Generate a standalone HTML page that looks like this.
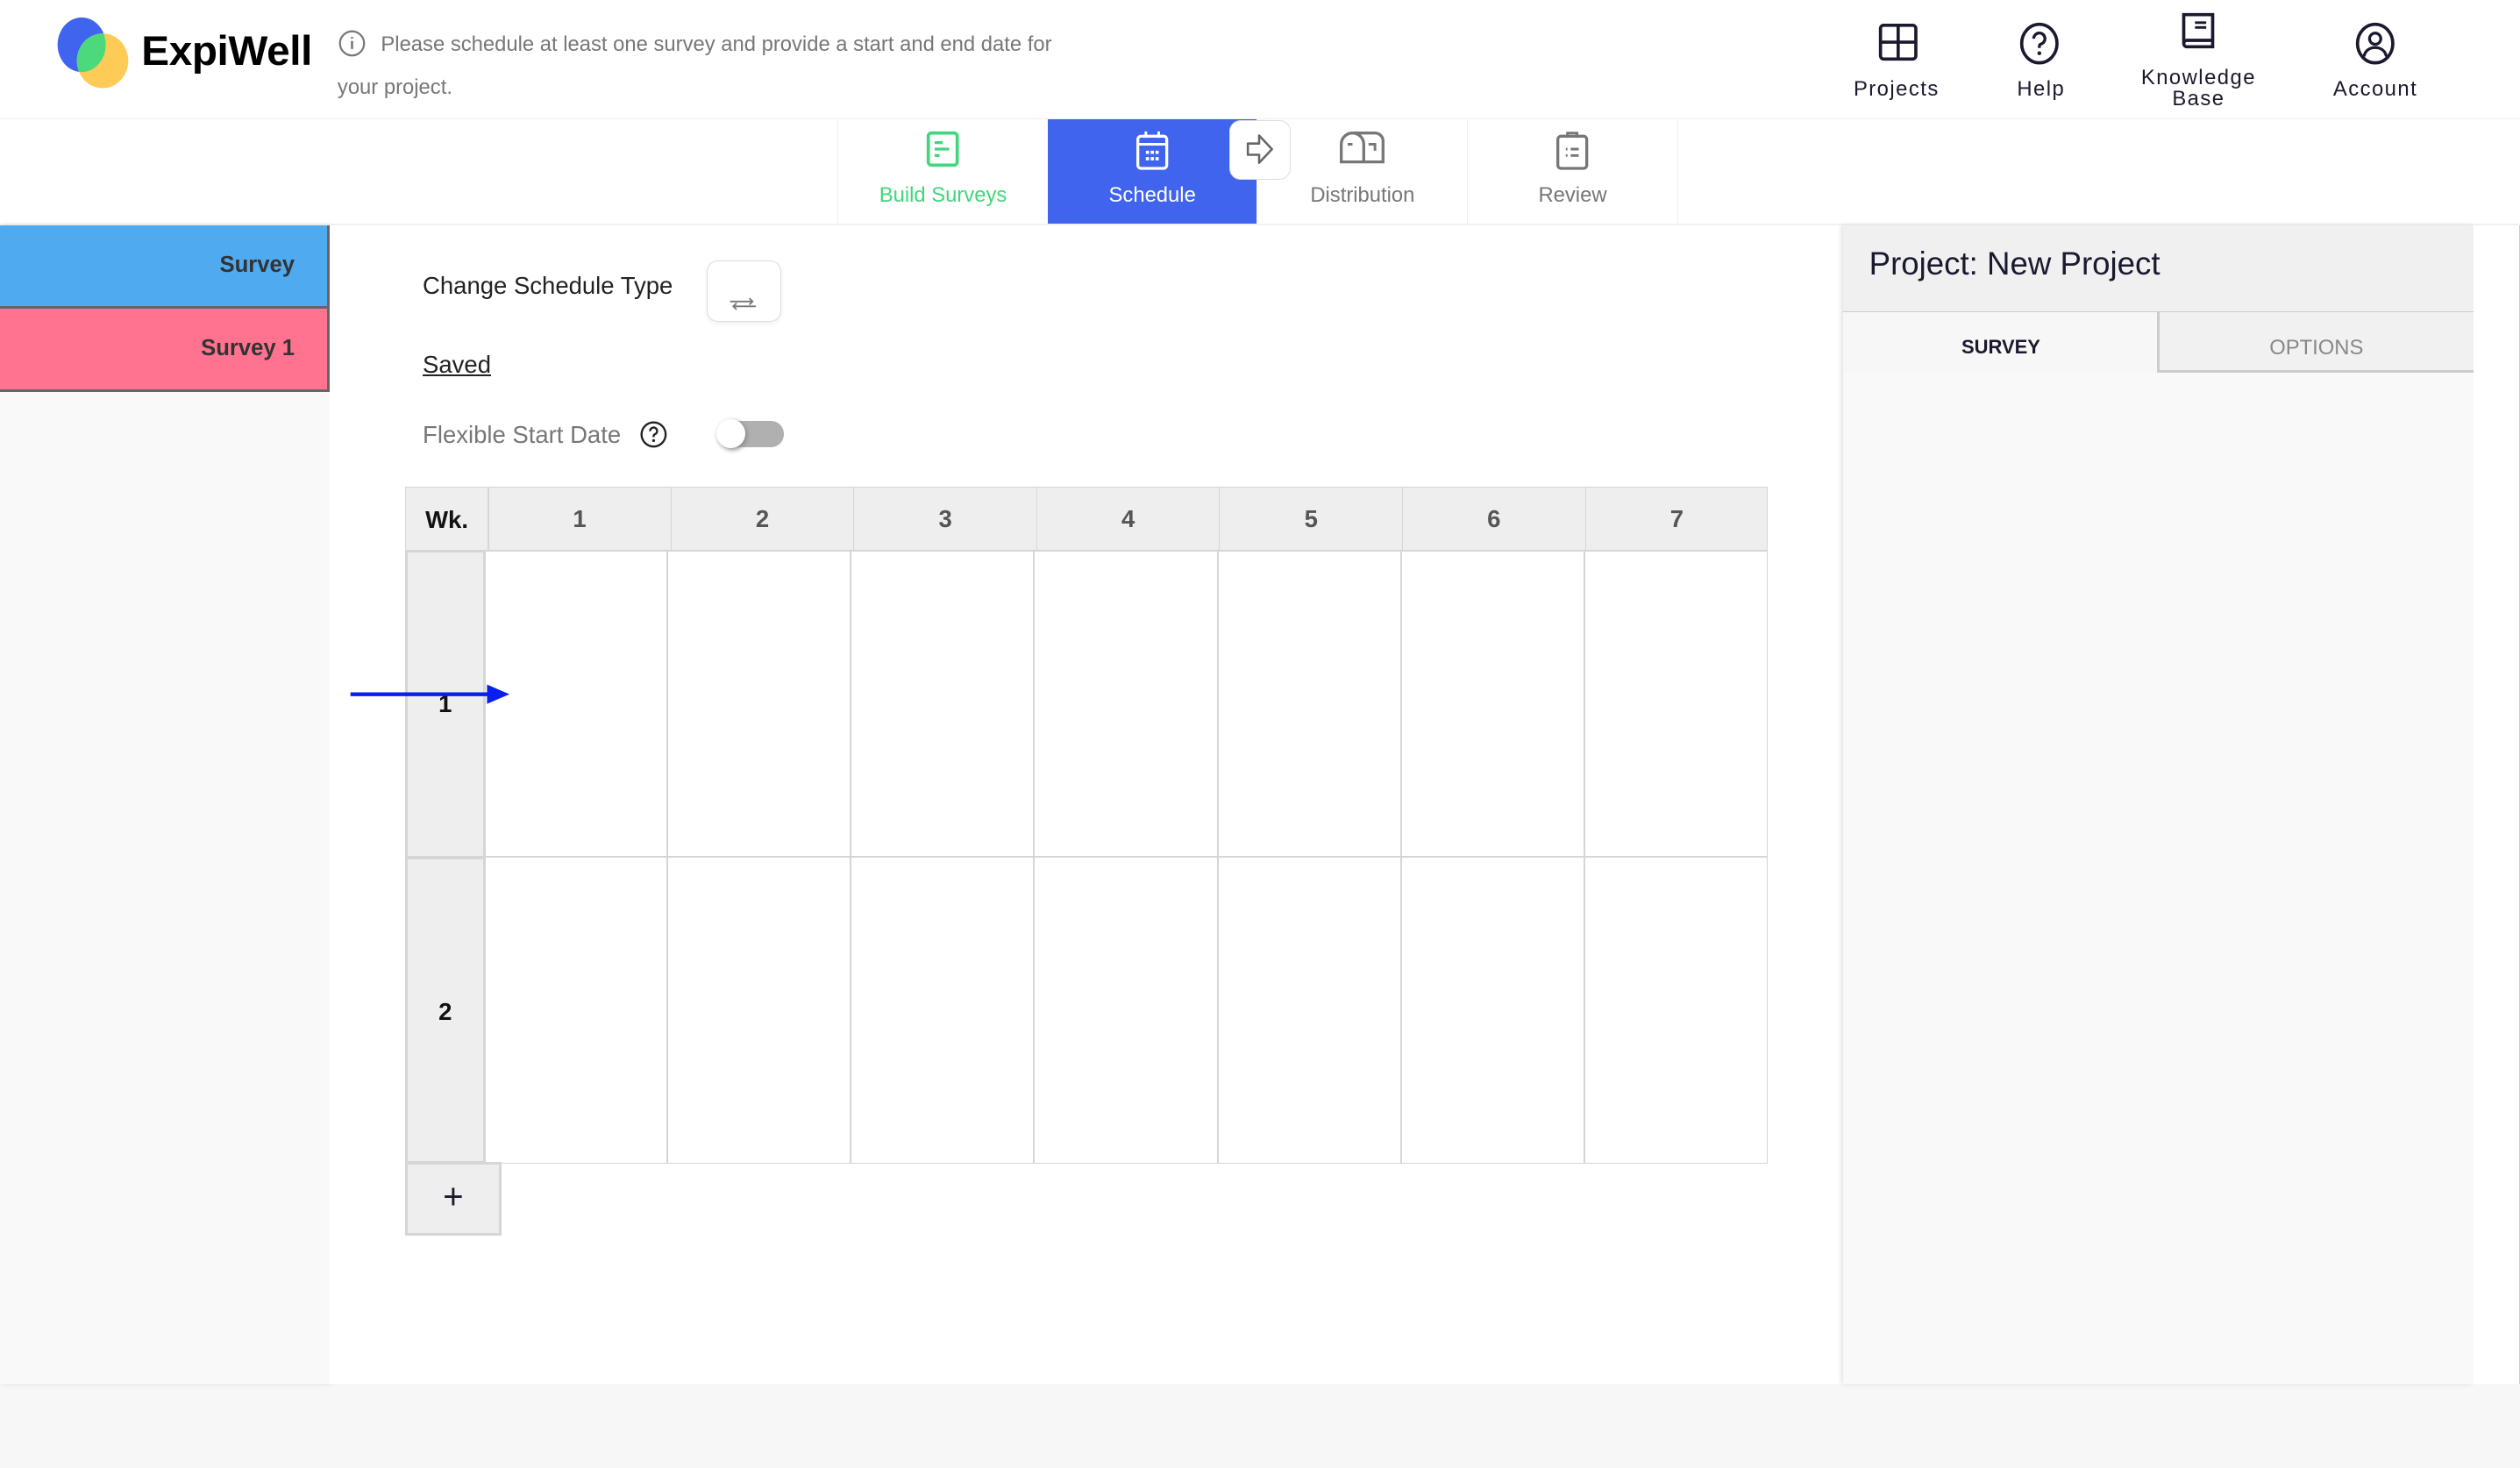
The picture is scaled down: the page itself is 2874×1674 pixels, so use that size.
<!DOCTYPE html>
<html><head><meta charset="utf-8"><style>
*{box-sizing:border-box;margin:0;padding:0}
html,body{width:2874px;height:1674px;overflow:hidden;background:#f7f7f7}
#w{zoom:1.8329;width:1568px;height:913px;position:relative;font-family:"Liberation Sans",sans-serif;background:#f7f7f7}
.a{position:absolute}
.hdr{left:0;top:0;width:1568px;height:74px;background:#fff;border-bottom:1px solid #eee}
.nav{font-size:13px;letter-spacing:.8px;color:#1a1a2e;text-align:center}
.tabbar{left:0;top:74px;width:1568px;height:65px;background:#fff;box-shadow:0 1px 2px #eee}
.tab{top:74px;height:65px;width:131px;text-align:center;font-size:13px;color:#777;border-left:1px solid #f0f0f0}
.tab svg{display:block;margin:7px auto 0}
.tab span{display:block;margin-top:8px}
.cell{border:1px solid #d6d6d6}
</style></head><body><div id="w">
<div class="a hdr"></div>
<svg class="a" style="left:34px;top:10px" width="48" height="46" viewBox="0 0 48 46">
<ellipse cx="17" cy="18" rx="15" ry="17" fill="#4064ee"/>
<ellipse cx="30" cy="28" rx="16" ry="17" fill="#ffcb57"/>
<clipPath id="c"><ellipse cx="17" cy="18" rx="15" ry="17"/></clipPath>
<ellipse cx="30" cy="28" rx="16" ry="17" fill="#4bd97b" clip-path="url(#c)"/>
</svg>
<div class="a" style="left:88px;top:17px;font-size:26px;font-weight:bold;color:#000;letter-spacing:-.2px">ExpiWell</div>
<svg class="a" style="left:210px;top:18px" width="18" height="18" viewBox="0 0 18 18"><circle cx="9" cy="9" r="7.5" fill="none" stroke="#777" stroke-width="1.2"/><path d="M9 7.5v5M9 5v1" stroke="#777" stroke-width="1.4"/></svg>
<div class="a" style="left:237px;top:14px;font-size:13px;color:#777;width:460px;line-height:27px">Please schedule at least one survey and provide a start and end date for</div>
<div class="a" style="left:210px;top:47px;font-size:13px;color:#777">your project.</div>
<svg class="a" style="left:1168px;top:15px" width="26" height="24" viewBox="0 0 26 24"><rect x="2" y="1" width="22" height="21" rx="2" fill="none" stroke="#1a1a2e" stroke-width="2"/><path d="M13 1v21M2 11.5h22" stroke="#1a1a2e" stroke-width="2"/></svg>
<div class="a nav" style="left:1140px;top:48px;width:80px">Projects</div>
<svg class="a" style="left:1256px;top:13px" width="26" height="28" viewBox="0 0 26 28"><ellipse cx="13" cy="14" rx="11" ry="12" fill="none" stroke="#1a1a2e" stroke-width="2"/><path d="M9.5 11a3.5 3.5 0 1 1 4.5 3.3c-1 .4-1 1-1 2.5" fill="none" stroke="#1a1a2e" stroke-width="1.8"/><circle cx="13" cy="20" r="1.2" fill="#1a1a2e"/></svg>
<div class="a nav" style="left:1230px;top:48px;width:80px">Help</div>
<svg class="a" style="left:1356px;top:7px" width="24" height="26" viewBox="0 0 24 26"><path d="M3 2h18v20H5a2 2 0 0 1-2-2zM3 20a2 2 0 0 1 2-2h16" fill="none" stroke="#1a1a2e" stroke-width="2"/><path d="M10 7h7M10 10h7" stroke="#1a1a2e" stroke-width="1.6"/></svg>
<div class="a nav" style="left:1318px;top:42px;width:100px;line-height:13px">Knowledge<br>Base</div>
<svg class="a" style="left:1465px;top:13px" width="26" height="28" viewBox="0 0 26 28"><ellipse cx="13" cy="14" rx="11" ry="12" fill="none" stroke="#1a1a2e" stroke-width="2"/><circle cx="13" cy="11" r="3.5" fill="none" stroke="#1a1a2e" stroke-width="1.8"/><path d="M6 22c1-4 4-5.5 7-5.5s6 1.5 7 5.5" fill="none" stroke="#1a1a2e" stroke-width="1.8"/></svg>
<div class="a nav" style="left:1438px;top:48px;width:80px">Account</div>
<div class="a tabbar"></div>
<div class="a tab" style="left:521px;color:#41d67c"><svg width="22" height="24" viewBox="0 0 22 24"><rect x="2" y="2" width="18" height="20" rx="2" fill="none" stroke="#41d67c" stroke-width="2"/><path d="M6 8h5M6 12h9M6 16h3" stroke="#41d67c" stroke-width="1.8"/></svg><span style="margin-top:9px">Build Surveys</span></div>
<div class="a tab" style="left:652px;width:130px;background:#4064ee;color:#fff;border:none"><svg width="22" height="26" viewBox="0 0 22 26"><rect x="2" y="4" width="18" height="20" rx="2" fill="none" stroke="#fff" stroke-width="1.8"/><path d="M2 9h18M7 1v4M15 1v4" stroke="#fff" stroke-width="1.6"/><path d="M7 13h2v2H7zM10 13h2v2h-2zM13 13h2v2h-2zM7 17h2v2H7zM10 17h2v2h-2zM13 17h2v2h-2z" fill="#fff"/></svg><span style="margin-top:7px">Schedule</span></div>
<div class="a tab" style="left:782px"><svg width="30" height="22" viewBox="0 0 30 22"><path d="M9 2h14a5 5 0 0 1 5 5v13H2V9a7 7 0 0 1 7-7zM9 2a7 7 0 0 1 7 7v11" fill="none" stroke="#777" stroke-width="1.8"/><path d="M6 9h3M19 9h4v4" fill="none" stroke="#777" stroke-width="1.6"/></svg><span style="margin-top:11px">Distribution</span></div>
<div class="a tab" style="left:913px;width:131px;border-right:1px solid #f0f0f0"><svg width="22" height="26" viewBox="0 0 22 26"><rect x="2" y="4" width="18" height="20" rx="2" fill="none" stroke="#777" stroke-width="1.8"/><path d="M8 5V2h6v3" fill="none" stroke="#777" stroke-width="1.6"/><path d="M7 12h1M10 12h5M7 16h1M10 16h5" stroke="#777" stroke-width="1.6"/></svg><span style="margin-top:7px">Review</span></div>
<div class="a" style="left:765px;top:75px;width:38px;height:37px;background:#fff;border:1px solid #ddd;border-radius:7px"><svg width="36" height="35" viewBox="0 0 36 35"><path d="M11 14h7v-5l8 8.5-8 8.5v-5h-7z" fill="none" stroke="#666" stroke-width="1.4" stroke-linejoin="round"/></svg></div>
<div class="a" style="left:0;top:140px;width:205px;height:721px;background:#f9f9f9;box-shadow:1px 0 3px #ddd"></div>
<div class="a" style="left:0;top:140px;width:205px;height:52px;background:#50aaf0;border-right:2px solid #666;border-bottom:2px solid #666;font-size:14px;font-weight:bold;color:#333;text-align:right;padding:17px 20px 0 0">Survey</div>
<div class="a" style="left:0;top:192px;width:205px;height:52px;background:#ff7390;border-right:2px solid #666;border-bottom:2px solid #666;font-size:14px;font-weight:bold;color:#333;text-align:right;padding:17px 20px 0 0">Survey 1</div>
<div class="a" style="left:205px;top:140px;width:942px;height:721px;background:#fff"></div>
<div class="a" style="left:263px;top:169px;font-size:15px;color:#222">Change Schedule Type</div>
<div class="a" style="left:440px;top:162px;width:46px;height:38px;border:1px solid #ddd;border-radius:7px;background:#fff;box-shadow:0 1px 3px #eee"><svg width="44" height="36" viewBox="0 0 44 36"><path d="M14 25h14M26 23l2 2-2 2M30 28H16M18 26l-2 2 2 2" fill="none" stroke="#777" stroke-width="1"/></svg></div>
<div class="a" style="left:263px;top:218px;font-size:15px;color:#222;text-decoration:underline">Saved</div>
<div class="a" style="left:263px;top:262px;font-size:15px;color:#777">Flexible Start Date</div>
<svg class="a" style="left:397px;top:261px" width="19" height="19" viewBox="0 0 19 19"><circle cx="9.5" cy="9.5" r="7.5" fill="none" stroke="#222" stroke-width="1.3"/><path d="M7.3 7.5a2.2 2.2 0 1 1 2.8 2c-.6.3-.6.7-.6 1.6" fill="none" stroke="#222" stroke-width="1.3"/><circle cx="9.5" cy="13.3" r=".9" fill="#222"/></svg>
<div class="a" style="left:447px;top:262px;width:41px;height:16px;border-radius:8px;background:#b0b0b0"></div>
<div class="a" style="left:446px;top:261px;width:18px;height:18px;border-radius:9px;background:#fff;box-shadow:1px 1px 3px #888"></div>
<div class="a" style="left:252px;top:303px;width:848px;height:421px;border:1px solid #d6d6d6;background:#fff"></div>
<div class="a cell" style="left:252px;top:303px;width:52px;height:40px;background:#eee;font-size:15px;font-weight:bold;color:#111;text-align:center;padding-top:11px">Wk.</div>
<div class="a" style="left:304px;top:303px;width:796px;height:40px;background:#eee;border:1px solid #d6d6d6"></div>
<div class="a" style="left:304px;top:303px;width:796px;height:40px;display:flex;font-size:15px;font-weight:bold;color:#555">
<div style="flex:1;text-align:center;padding-top:11px;border-right:1px solid #d6d6d6">1</div><div style="flex:1;text-align:center;padding-top:11px;border-right:1px solid #d6d6d6">2</div><div style="flex:1;text-align:center;padding-top:11px;border-right:1px solid #d6d6d6">3</div><div style="flex:1;text-align:center;padding-top:11px;border-right:1px solid #d6d6d6">4</div><div style="flex:1;text-align:center;padding-top:11px;border-right:1px solid #d6d6d6">5</div><div style="flex:1;text-align:center;padding-top:11px;border-right:1px solid #d6d6d6">6</div><div style="flex:1;text-align:center;padding-top:11px">7</div></div>
<div class="a cell" style="left:252px;top:342px;width:50px;height:192px;background:#eee;border-width:2px;font-size:15px;font-weight:bold;color:#111;text-align:center;padding-top:86px">1</div>
<div class="a cell" style="left:252px;top:533px;width:50px;height:191px;background:#eee;border-width:2px;font-size:15px;font-weight:bold;color:#111;text-align:center;padding-top:86px">2</div>
<div class="a" style="left:301px;top:342px;width:799px;height:382px;display:grid;grid-template-columns:repeat(7,1fr);grid-template-rows:1fr 1fr">
<div class="cell"></div><div class="cell"></div><div class="cell"></div><div class="cell"></div><div class="cell"></div><div class="cell"></div><div class="cell"></div>
<div class="cell"></div><div class="cell"></div><div class="cell"></div><div class="cell"></div><div class="cell"></div><div class="cell"></div><div class="cell"></div></div>
<div class="a" style="left:252px;top:723px;width:60px;height:46px;background:#eee;border:2px solid #d6d6d6;font-size:22px;color:#1a1a2e;text-align:center;line-height:40px">+</div>
<svg class="a" style="left:216px;top:424px" width="104" height="16" viewBox="0 0 104 16"><path d="M2 8h86" stroke="#0a1ef0" stroke-width="2.4"/><path d="M87 2l14 6-14 6z" fill="#0a1ef0"/></svg>
<div class="a" style="left:1147px;top:140px;width:392px;height:721px;background:#f9f9f9;box-shadow:-1px 0 3px #ddd"></div>
<div class="a" style="left:1147px;top:140px;width:392px;height:54px;background:#f0f0f0;border-bottom:1px solid #ccc;font-size:20px;color:#1a1a2e;padding:13px 0 0 16px">Project: New Project</div>
<div class="a" style="left:1147px;top:194px;width:196px;height:38px;background:#f7f7f7;font-size:12px;font-weight:bold;color:#1a1a2e;text-align:center;padding-top:15px">SURVEY</div>
<div class="a" style="left:1342px;top:194px;width:197px;height:38px;background:#f1f1f1;border-left:2px solid #ccc;border-bottom:2px solid #ccc;font-size:13px;color:#888;text-align:center;padding-top:15px">OPTIONS</div>
<div class="a" style="left:1539px;top:140px;width:29px;height:721px;background:#fff;border-right:1px solid #ccc"></div>
</div></body></html>
